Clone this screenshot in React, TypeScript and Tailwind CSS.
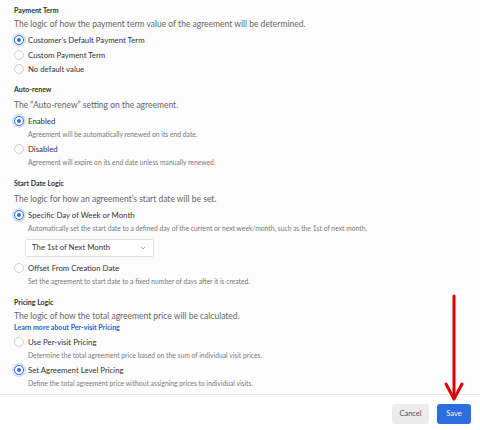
import React from "react"

type OptionProps = {
  label: string
  sub?: string
  checked?: boolean
  className?: string
}

function Radio({ checked }: { checked?: boolean }) {
  if (checked) {
    return (
      <span className="w-[10px] h-[10px] rounded-full border border-[#2f6fdc] bg-white ring-2 ring-[#d4e2fa] flex items-center justify-center shrink-0">
        <span className="w-[4px] h-[4px] rounded-full bg-[#2f6fdc]" />
      </span>
    )
  }
  return <span className="w-[10px] h-[10px] rounded-full border border-[#d0d0d0] bg-white shrink-0" />
}

function Option({ label, sub, checked, className }: OptionProps) {
  return (
    <div className={className}>
      <div className="h-[14px] flex items-center gap-[4px]">
        <Radio checked={checked} />
        <span className="text-[7.8px] leading-[14px] text-[#333]">{label}</span>
      </div>
      {sub && <div className="h-[12px] leading-[12px] pl-[14px] text-[6.75px] text-[#7a7a7a]">{sub}</div>}
    </div>
  )
}

function Heading({ children, className }: { children: React.ReactNode; className?: string }) {
  return <div className={"h-[12px] leading-[12px] text-[7px] font-bold text-[#333] " + (className ?? "")}>{children}</div>
}

function Desc({ children, className }: { children: React.ReactNode; className?: string }) {
  return <div className={"h-[14px] leading-[14px] text-[8.5px] text-[#666] " + (className ?? "")}>{children}</div>
}

export default function App() {
  return (
    <div className="relative w-[480px] h-[430px] bg-white flex flex-col font-['Lato',sans-serif] overflow-hidden">
      <div className="h-[395px] bg-[#fcfcfc] border-b border-[#e6e6e6] px-[14px] pt-[4px]">
        <Heading>Payment Term</Heading>
        <Desc className="mt-[1px]">The logic of how the payment term value of the agreement will be determined.</Desc>
        <div className="mt-[2px] flex flex-col gap-[0.5px]">
          <Option checked label="Customer’s Default Payment Term" />
          <Option label="Custom Payment Term" />
          <Option label="No default value" />
        </div>

        <Heading className="mt-[7px]">Auto-renew</Heading>
        <Desc className="mt-[3px]">The “Auto-renew” setting on the agreement.</Desc>
        <Option className="mt-[2px]" checked label="Enabled" sub="Agreement will be automatically renewed on its end date." />
        <Option className="mt-[2px]" label="Disabled" sub="Agreement will expire on its end date unless manually renewed." />

        <Heading className="mt-[9px]">Start Date Logic</Heading>
        <Desc className="mt-[3px]">The logic for how an agreement’s start date will be set.</Desc>
        <Option
          className="mt-[2px]"
          checked
          label="Specific Day of Week or Month"
          sub="Automatically set the start date to a defined day of the current or next week/month, such as the 1st of next month."
        />
        <div className="mt-[5px] ml-[11px] w-[129px] h-[18px] bg-white border border-[#e2e2e2] rounded-[2px] flex items-center justify-between pl-[6px] pr-[7px]">
          <span className="text-[7.8px] text-[#333]">The 1st of Next Month</span>
          <svg width="6" height="4" viewBox="0 0 6 4" fill="none">
            <path d="M1 1l2 2 2-2" stroke="#999" strokeWidth="0.8" />
          </svg>
        </div>
        <Option
          className="mt-[4px]"
          label="Offset From Creation Date"
          sub="Set the agreement to start date to a fixed number of days after it is created."
        />

        <Heading className="mt-[9px]">Pricing Logic</Heading>
        <div className="mt-[2px] h-[12px] leading-[12px] text-[8.5px] text-[#666]">The logic of how the total agreement price will be calculated.</div>
        <div className="h-[10px] leading-[10px] text-[7px] font-bold text-[#1f64d2]">Learn more about Per-visit Pricing</div>
        <Option
          className="mt-[3px]"
          label="Use Per-visit Pricing"
          sub="Determine the total agreement price based on the sum of individual visit prices."
        />
        <Option
          className="mt-[2px]"
          checked
          label="Set Agreement Level Pricing"
          sub="Define the total agreement price without assigning prices to individual visits."
        />
      </div>

      <div className="flex-1 flex items-center justify-end gap-[8px] pr-[9px] pt-[2px]">
        <button className="h-[20px] w-[37px] rounded-[3px] bg-[#ececec] text-[7.5px] text-[#555]">Cancel</button>
        <button className="h-[20px] w-[34px] rounded-[3px] bg-[#2c6ddf] text-[7.5px] text-white">Save</button>
      </div>

      <svg className="absolute left-[440px] top-[290px]" width="30" height="116" viewBox="0 0 30 116" fill="none">
        <path d="M14 6V108" stroke="#e00000" strokeWidth="3" strokeLinecap="round" />
        <path d="M6 94L14 109L22 94" stroke="#e00000" strokeWidth="3" strokeLinecap="round" strokeLinejoin="round" />
      </svg>
    </div>
  )
}
